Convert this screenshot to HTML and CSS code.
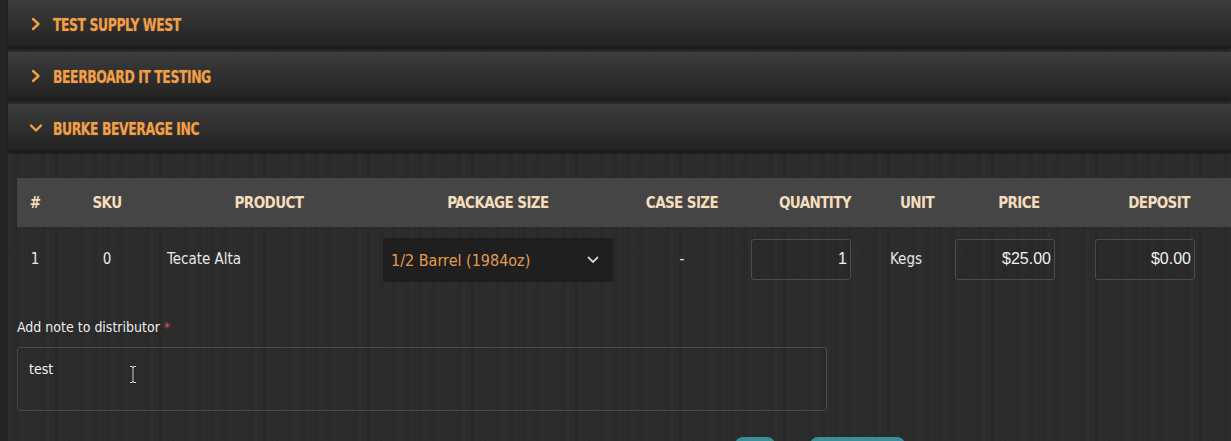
FILE: index.html
```html
<!DOCTYPE html>
<html lang="en">
<head>
<meta charset="utf-8">
<title>Order</title>
<link rel="stylesheet" href="styles.css">
</head>
<body>
<div class="page">
  <div class="acc">
    <div class="acc-head">
      <svg class="chev" width="12" height="14" viewBox="0 0 12 14"><path d="M3 2 L8.5 7 L3 12" fill="none" stroke="#f0a04a" stroke-width="2.4" stroke-linecap="round" stroke-linejoin="round"/></svg>
      <span class="acc-title">TEST SUPPLY WEST</span>
    </div>
    <div class="acc-head">
      <svg class="chev" width="12" height="14" viewBox="0 0 12 14"><path d="M3 2 L8.5 7 L3 12" fill="none" stroke="#f0a04a" stroke-width="2.4" stroke-linecap="round" stroke-linejoin="round"/></svg>
      <span class="acc-title">BEERBOARD IT TESTING</span>
    </div>
    <div class="acc-head">
      <svg class="chev down" width="14" height="12" viewBox="0 0 14 12"><path d="M2 3.5 L7 8.5 L12 3.5" fill="none" stroke="#f0a04a" stroke-width="2.4" stroke-linecap="round" stroke-linejoin="round"/></svg>
      <span class="acc-title">BURKE BEVERAGE INC</span>
    </div>
  </div>

  <div class="content">
    <div class="grid thead">
      <div class="c">#</div>
      <div class="c">SKU</div>
      <div class="c">PRODUCT</div>
      <div class="c">PACKAGE SIZE</div>
      <div class="c">CASE SIZE</div>
      <div class="c">QUANTITY</div>
      <div class="c">UNIT</div>
      <div class="c">PRICE</div>
      <div class="c">DEPOSIT</div>
      <div></div>
    </div>
    <div class="grid trow">
      <div class="c">1</div>
      <div class="c">0</div>
      <div class="l prod">Tecate Alta</div>
      <div class="l cell-pad">
        <div class="select">
          <span>1/2 Barrel (1984oz)</span>
          <svg width="12" height="8" viewBox="0 0 12 8"><path d="M1.5 1.5 L6 6 L10.5 1.5" fill="none" stroke="#cfcfcf" stroke-width="1.8" stroke-linecap="round" stroke-linejoin="round"/></svg>
        </div>
      </div>
      <div class="c">-</div>
      <div class="l cell-pad"><div class="inp">1</div></div>
      <div class="l unit">Kegs</div>
      <div class="l cell-pad"><div class="inp">$25.00</div></div>
      <div class="l cell-pad dep"><div class="inp">$0.00</div></div>
      <div></div>
    </div>

    <div class="note">
      <div class="label">Add note to distributor <span class="req">*</span></div>
      <div class="textarea">
        <span class="ta-text">test</span>
        <svg class="ibeam" width="10" height="19" viewBox="0 0 10 19"><path d="M2 1.5 H4 Q5 1.5 5 3 V16 Q5 17.5 4 17.5 H2 M8 1.5 H6 Q5 1.5 5 3 M5 16 Q5 17.5 6 17.5 H8" fill="none" stroke="#111" stroke-width="2.2"/><path d="M2 1.5 H4 Q5 1.5 5 3 V16 Q5 17.5 4 17.5 H2 M8 1.5 H6 Q5 1.5 5 3 M5 16 Q5 17.5 6 17.5 H8" fill="none" stroke="#e8e8e8" stroke-width="1"/></svg>
      </div>
    </div>

    <div class="actions">
      <div class="btn small"></div>
      <div class="btn wide"></div>
    </div>
  </div>
</div>
</body>
</html>
```
FILE: styles.css
```css
* { box-sizing: border-box; }
html, body {
  margin: 0;
  padding: 0;
  height: 100%;
  overflow: hidden;
}
body {
  background-color: #2a2a2a;
  background-image:
    repeating-linear-gradient(90deg, rgba(255,255,255,0.012) 0px, rgba(255,255,255,0.012) 2px, rgba(0,0,0,0.03) 3px, rgba(0,0,0,0) 5px, rgba(255,255,255,0.02) 9px, rgba(0,0,0,0) 13px);
  font-family: "DejaVu Sans Condensed", "Liberation Sans", sans-serif;
  color: #e6e6e6;
}
.page {
  border-left: 8px solid #252525;
  min-height: 441px;
}
.acc {
  display: flex;
  flex-direction: column;
  gap: 4px;
}
.acc-head {
  height: 48px;
  display: flex;
  align-items: center;
  padding-left: 21px;
  padding-top: 2px;
  background: linear-gradient(180deg, #3e3e3e 0%, #333333 35%, #282828 80%, #222222 100%);
  border-bottom: 2px solid #1d1d1d;
  box-shadow: 0 1px 2px rgba(0,0,0,0.5);
}
.chev {
  width: 14px;
  flex: none;
  margin-right: 10px;
}
.acc-title {
  display: inline-block;
  color: #f0a04a;
  font-weight: bold;
  font-size: 18px;
  letter-spacing: -0.6px;
  transform: scaleX(0.77);
  transform-origin: left center;
  white-space: nowrap;
  text-shadow: 0 0 2px rgba(240,130,40,0.35);
}
.content {
  padding: 26px 0 0 9px;
}
.grid {
  display: grid;
  grid-template-columns: 36px 108px 216px 242px 126px 140px 64px 140px 140px 1fr;
  align-items: center;
}
.thead {
  height: 49px;
  background: #454545;
  color: #f4ddbd;
  font-weight: bold;
  font-size: 15px;
  letter-spacing: -0.6px;
}
.trow {
  height: 64px;
  font-size: 15px;
  color: #e8e8e8;
}
.c { text-align: center; }
.l { text-align: left; }
.prod { padding-left: 6px; }
.unit { padding-left: 5px; }
.cell-pad { padding-left: 6px; }
.dep { padding-left: 6px; }
.select {
  width: 230px;
  height: 44px;
  background: #1f1f1f;
  border-radius: 2px;
  display: flex;
  align-items: center;
  justify-content: space-between;
  padding: 0 14px 0 8px;
  color: #e39b52;
  font-size: 16px;
  margin-top: 2px;
}
.inp {
  width: 100px;
  height: 41px;
  border: 1px solid #4c4c4c;
  border-radius: 3px;
  display: flex;
  align-items: center;
  justify-content: flex-end;
  padding-right: 3px;
  font-family: "Liberation Sans", sans-serif;
  font-size: 16px;
  color: #f0f0f0;
  background: rgba(0,0,0,0.04);
}
.note {
  padding-top: 28px;
}
.label {
  font-size: 14px;
  color: #ececec;
  margin-bottom: 12px;
}
.req { color: #d9534f; }
.textarea {
  position: relative;
  width: 810px;
  height: 64px;
  border: 1px solid #4a4a4a;
  border-radius: 3px;
  padding: 13px 11px;
  font-size: 14px;
  color: #f4f4f4;
}
.ibeam {
  position: absolute;
  left: 110px;
  top: 17px;
}
.actions {
  display: flex;
  gap: 35px;
  padding-left: 718px;
  margin-top: 26px;
}
.btn {
  height: 20px;
  background: #3b8f9c;
  border-radius: 8px;
}
.btn.small { width: 40px; }
.btn.wide { width: 95px; }
```
